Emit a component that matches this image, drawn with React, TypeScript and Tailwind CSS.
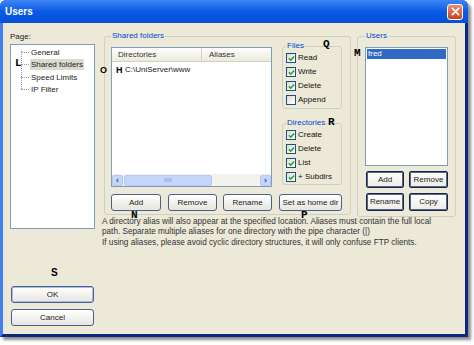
import React from "react";

function Check({ checked, label }: { checked: boolean; label: string }) {
  return (
    <div className="flex items-center h-[14px]">
      <span className="w-[10px] h-[10px] border border-[#1C5180] bg-gradient-to-br from-[#dcdcd5] to-white flex items-center justify-center">
        {checked && (
          <svg viewBox="0 0 8 8" className="w-[7px] h-[7px]">
            <path d="M1 3.8 L3.1 6 L7 1.6" stroke="#21A121" strokeWidth="1.7" fill="none" />
          </svg>
        )}
      </span>
      <span className="ml-[2px] text-[#111]">{label}</span>
    </div>
  );
}

function Btn({ children, className = "" }: { children: React.ReactNode; className?: string }) {
  return (
    <div
      className={
        "flex items-center justify-center rounded-[3px] border border-[#4a5f8a] bg-gradient-to-b from-white to-[#e6e5de] text-[#222] " +
        className
      }
    >
      {children}
    </div>
  );
}

function DarkBtn({ children, className = "" }: { children: React.ReactNode; className?: string }) {
  return (
    <div
      className={
        "flex items-center justify-center rounded-[2px] border border-[#1b2440] shadow-[inset_0_0_0_1px_#55648a] bg-gradient-to-b from-white to-[#ecebe5] text-[#222] " +
        className
      }
    >
      {children}
    </div>
  );
}

export default function App() {
  return (
    <div className="relative w-[474px] h-[345px] bg-white font-['Liberation_Sans',Arial,sans-serif] text-[8px] leading-[10px] text-black">
      <div className="flex flex-col w-[468px] h-[337px] rounded-t-[6px] bg-[#0a4fd8] shadow-[3px_3px_3px_rgba(0,0,0,0.45)] overflow-hidden">
        {/* Title bar */}
        <div className="h-[23px] shrink-0 flex items-center justify-between pl-[5px] pr-[5px] bg-gradient-to-b from-[#3d86f5] via-[#0a5ae6] to-[#0650d8]">
          <span className="text-white font-bold text-[10px] leading-[12px]">Users</span>
          <div className="w-[16px] h-[16px] rounded-[3px] border border-white bg-gradient-to-b from-[#e98f72] to-[#c6421d] flex items-center justify-center">
            <svg viewBox="0 0 10 10" className="w-[9px] h-[9px]">
              <path d="M1.5 1.5 L8.5 8.5 M8.5 1.5 L1.5 8.5" stroke="white" strokeWidth="1.8" strokeLinecap="round" />
            </svg>
          </div>
        </div>

        {/* Client area */}
        <div className="flex-1 flex bg-[#ECE9D8] border-l-[3px] border-l-[#3f7ff0] border-r-[3px] border-r-[#0b2a7d] border-b-[3px] border-b-[#0b2a7d]">
          {/* Left column */}
          <div className="ml-[7px] w-[85px] flex flex-col pt-[9px]">
            <span className="text-[#222]">Page:</span>
            <div className="relative mt-[2px] h-[185px] border border-[#7F9DB9] bg-white pt-[1px]">
              <div className="absolute left-[10px] top-[6px] h-[38px] border-l border-dotted border-[#999]" />
              {["General", "Shared folders", "Speed Limits", "IP Filter"].map((t, i) => (
                <div key={t} className="flex items-center h-[12.5px] pl-[10px]">
                  <span className="w-[8px] border-t border-dotted border-[#999]" />
                  <span
                    className={
                      "ml-[1px] px-[1px] leading-[11px] text-[#222] " + (i === 1 ? "bg-[#dcdad0]" : "")
                    }
                  >
                    {t}
                  </span>
                </div>
              ))}
            </div>
            <Btn className="mt-[57px] h-[17px] w-[83px] ml-[1px] shadow-[inset_0_0_0_1px_#a9c1ea]">OK</Btn>
            <Btn className="mt-[6px] h-[17px] w-[83px] ml-[1px]">Cancel</Btn>
          </div>

          {/* Right area */}
          <div className="ml-[9px] flex flex-col pt-[8px]">
            <div className="flex items-start">
              {/* Shared folders */}
              <fieldset className="w-[247px] border border-[#D0D0BF] rounded-[3px] pl-[6px] pr-[8px] pb-[3px]">
                <legend className="px-[1px] text-[#0046D5]">Shared folders</legend>
                <div className="flex items-start">
                  <div className="mt-[6px] w-[161px] h-[140px] border border-[#7F9DB9] bg-white flex flex-col">
                    <div className="h-[14px] flex border-b border-[#d6d2c2] bg-gradient-to-b from-white to-[#ebeadb] text-[#333]">
                      <div className="w-[90px] pl-[6px] flex items-center border-r border-[#d6d2c2]">Directories</div>
                      <div className="pl-[7px] flex items-center">Aliases</div>
                    </div>
                    <div className="flex-1 pt-[2px]">
                      <div className="flex items-center h-[12px] pl-[4px]">
                        <span className="font-bold text-[9px] w-[9px]">H</span>
                        <span className="text-[#222]">C:\UniServer\www</span>
                      </div>
                    </div>
                    <div className="h-[12px] flex bg-[#f3f2ec]">
                      <div className="w-[11px] h-[11px] mt-[0.5px] rounded-[2px] bg-[#c6d6fb] border border-[#b4c8f5] flex items-center justify-center">
                        <svg viewBox="0 0 6 6" className="w-[5px] h-[5px]">
                          <path d="M4 1 L2 3 L4 5" stroke="#4d6185" strokeWidth="1.3" fill="none" />
                        </svg>
                      </div>
                      <div className="ml-[1px] w-[88px] h-[11px] mt-[0.5px] rounded-[2px] bg-[#c6d6fb] border border-[#b4c8f5] flex items-center justify-center">
                        <svg viewBox="0 0 8 6" className="w-[8px] h-[6px]">
                          <path d="M1 1 V5 M3 1 V5 M5 1 V5 M7 1 V5" stroke="#8ea7e0" strokeWidth="1" />
                        </svg>
                      </div>
                      <div className="flex-1" />
                      <div className="w-[11px] h-[11px] mt-[0.5px] rounded-[2px] bg-[#c6d6fb] border border-[#b4c8f5] flex items-center justify-center">
                        <svg viewBox="0 0 6 6" className="w-[5px] h-[5px]">
                          <path d="M2 1 L4 3 L2 5" stroke="#4d6185" strokeWidth="1.3" fill="none" />
                        </svg>
                      </div>
                    </div>
                  </div>

                  <div className="ml-[10px] w-[60px] flex flex-col">
                    <fieldset className="border border-[#D0D0BF] rounded-[3px] pl-[3px] pb-[1px]">
                      <legend className="px-[1px] text-[#0046D5]">Files</legend>
                      <Check checked label="Read" />
                      <Check checked label="Write" />
                      <Check checked label="Delete" />
                      <Check checked={false} label="Append" />
                    </fieldset>
                    <fieldset className="mt-[9px] border border-[#D0D0BF] rounded-[3px] pl-[3px]">
                      <legend className="px-[1px] text-[#0046D5]">Directories</legend>
                      <Check checked label="Create" />
                      <Check checked label="Delete" />
                      <Check checked label="List" />
                      <Check checked label="+ Subdirs" />
                    </fieldset>
                  </div>
                </div>
                <div className="flex mt-[7px]">
                  <Btn className="w-[50px] h-[17px]">Add</Btn>
                  <Btn className="ml-[7px] w-[49px] h-[17px]">Remove</Btn>
                  <Btn className="ml-[6px] w-[49px] h-[17px]">Rename</Btn>
                  <Btn className="ml-[7px] w-[63px] h-[17px]">Set as home dir</Btn>
                </div>
              </fieldset>

              {/* Users */}
              <fieldset className="ml-[6px] w-[99px] border border-[#D0D0BF] rounded-[3px] pl-[7px] pb-[5px]">
                <legend className="px-[1px] text-[#0046D5]">Users</legend>
                <div className="mt-[6px] w-[83px] h-[119px] border border-[#7F9DB9] bg-white p-[1px]">
                  <div className="h-[10px] bg-[#316AC5] text-white pl-[1px] leading-[10px]">fred</div>
                </div>
                <div className="flex mt-[5px] pl-[1px]">
                  <DarkBtn className="w-[38px] h-[17px]">Add</DarkBtn>
                  <DarkBtn className="ml-[5px] w-[39px] h-[17px]">Remove</DarkBtn>
                </div>
                <div className="flex mt-[5px] pl-[1px]">
                  <DarkBtn className="w-[38px] h-[18px]">Rename</DarkBtn>
                  <DarkBtn className="ml-[5px] w-[39px] h-[18px]">Copy</DarkBtn>
                </div>
              </fieldset>
            </div>

            <div className="ml-[-2px] mt-[0px] text-[#333] text-[8.2px] leading-[9.5px] whitespace-nowrap">
              <div>A directory alias will also appear at the specified location. Aliases must contain the full local</div>
              <div>path. Separate multiple aliases for one directory with the pipe character (|)</div>
              <div className="mt-[1.5px]">If using aliases, please avoid cyclic directory structures, it will only confuse FTP clients.</div>
            </div>
          </div>
        </div>
      </div>

      {/* Annotation letters */}
      <span className="absolute left-[15px] top-[58px] font-['Liberation_Mono',monospace] font-bold text-[11px] leading-[11px]">L</span>
      <span className="absolute left-[100px] top-[65px] font-bold text-[9px] leading-[10px]">O</span>
      <span className="absolute left-[323px] top-[39px] font-['Liberation_Mono',monospace] font-bold text-[11px] leading-[11px]">Q</span>
      <span className="absolute left-[354px] top-[48px] font-['Liberation_Mono',monospace] font-bold text-[11px] leading-[11px]">M</span>
      <span className="absolute left-[328px] top-[117px] font-['Liberation_Mono',monospace] font-bold text-[11px] leading-[11px]">R</span>
      <span className="absolute left-[131px] top-[210px] font-['Liberation_Mono',monospace] font-bold text-[11px] leading-[10px]">N</span>
      <span className="absolute left-[301px] top-[210px] font-['Liberation_Mono',monospace] font-bold text-[11px] leading-[10px]">P</span>
      <span className="absolute left-[51px] top-[267px] font-bold text-[10px] leading-[11px]">S</span>
    </div>
  );
}
